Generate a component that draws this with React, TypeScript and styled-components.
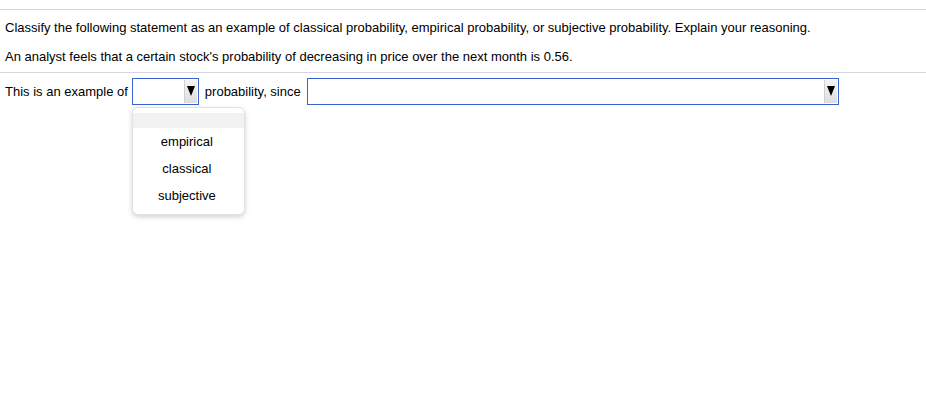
import React from "react";
import styled, { createGlobalStyle } from "styled-components";

const Global = createGlobalStyle`
  html, body { margin: 0; padding: 0; background: #fff; }
  body { font-family: "Liberation Sans", Arial, sans-serif; font-size: 13px; color: #000; }
`;

const Page = styled.div`
  padding-top: 9px;
  min-height: 417px;
  box-sizing: border-box;
`;

const Divider = styled.div`
  height: 1px;
  background: #d3d6de;
`;

const Para = styled.p<{ $top: number; $bottom: number }>`
  margin: 0;
  padding: ${(p) => p.$top}px 5px ${(p) => p.$bottom}px;
  line-height: 16px;
`;

const Row = styled.div`
  display: flex;
  align-items: center;
  padding: 5px 5px 0;
  line-height: 16px;
`;

const Label = styled.span`
  white-space: nowrap;
  padding-top: 1px;
`;

const SelectWrap = styled.div<{ $width: number }>`
  position: relative;
  flex: none;
  width: ${(p) => p.$width}px;
`;

const SelectBox = styled.div`
  box-sizing: border-box;
  height: 27px;
  border: 1px solid #3a63cf;
  display: flex;
  justify-content: flex-end;
  align-items: center;
  padding-right: 1px;
  background: #fff;
`;

const ArrowButton = styled.div`
  box-sizing: border-box;
  width: 13px;
  height: 23px;
  background: linear-gradient(#f4f4f4, #dedede);
  border-left: 1px solid #cfcfcf;
  display: flex;
  align-items: center;
  justify-content: center;
`;

const Triangle = styled.div`
  width: 0;
  height: 0;
  border-left: 4.5px solid transparent;
  border-right: 4.5px solid transparent;
  border-top: 10px solid #000;
  margin-top: -2px;
`;

const Menu = styled.div`
  position: absolute;
  top: 29px;
  left: 0;
  width: 113px;
  box-sizing: border-box;
  background: #fff;
  border: 1px solid #e2e2e2;
  border-radius: 6px;
  box-shadow: 0 2px 5px rgba(0, 0, 0, 0.18);
  padding: 5px 0;
  z-index: 10;
`;

const MenuItem = styled.div<{ $blank?: boolean }>`
  height: ${(p) => (p.$blank ? 15 : 27)}px;
  line-height: ${(p) => (p.$blank ? 15 : 27)}px;
  text-align: center;
  padding-right: 3px;
  background: ${(p) => (p.$blank ? "#f2f2f2" : "#fff")};
  color: #000;
`;

function Select({ width, open }: { width: number; open?: boolean }) {
  return (
    <SelectWrap $width={width}>
      <SelectBox>
        <ArrowButton>
          <Triangle />
        </ArrowButton>
      </SelectBox>
      {open ? (
        <Menu>
          <MenuItem $blank />
          <MenuItem>empirical</MenuItem>
          <MenuItem>classical</MenuItem>
          <MenuItem>subjective</MenuItem>
        </Menu>
      ) : null}
    </SelectWrap>
  );
}

const Gap = styled.span<{ $w: number }>`
  display: inline-block;
  flex: none;
  width: ${(p) => p.$w}px;
`;

export default function App() {
  return (
    <>
      <Global />
      <Page>
        <Divider />
        <Para $top={10} $bottom={13}>
          Classify the following statement as an example of classical probability, empirical probability, or
          subjective probability. Explain your reasoning.
        </Para>
        <Para $top={0} $bottom={7}>
          An analyst feels that a certain stock's probability of decreasing in price over the next month is 0.56.
        </Para>
        <Divider />
        <Row>
          <Label>This is an example of</Label>
          <Gap $w={4} />
          <Select width={67} open={true} />
          <Gap $w={6} />
          <Label>probability, since</Label>
          <Gap $w={6} />
          <Select width={532} />
        </Row>
      </Page>
    </>
  );
}
